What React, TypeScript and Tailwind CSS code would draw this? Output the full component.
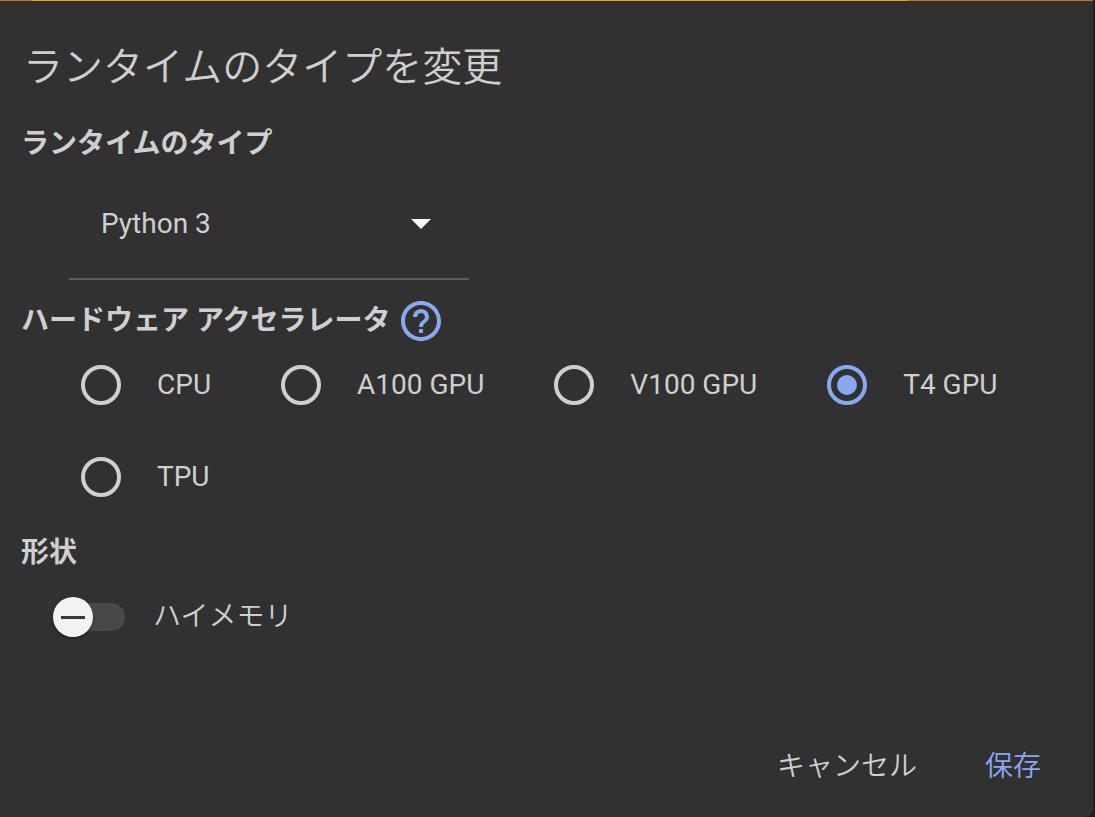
import { useState } from "react";
import { MdArrowDropDown, MdHelpOutline } from "react-icons/md";

const accelerators = ["CPU", "A100 GPU", "V100 GPU", "T4 GPU", "TPU"];

function AcceleratorGroup() {
  const [selected, setSelected] = useState("T4 GPU");
  return (
    <fieldset aria-labelledby="accelerator-heading" className="ml-[60px] flex flex-wrap gap-x-[70px] gap-y-[52px]">
      {accelerators.map((name) => (
        <label key={name} className="flex h-10 items-center gap-9 whitespace-nowrap">
          <input
            type="radio"
            name="accelerator"
            value={name}
            checked={selected === name}
            onChange={() => setSelected(name)}
            className="size-10 shrink-0 appearance-none rounded-full border-4 border-[#cfcfcf] bg-clip-content p-1.5 checked:border-[#89a8f2] checked:bg-[#89a8f2]"
          />
          {name}
        </label>
      ))}
    </fieldset>
  );
}

function HighMemorySwitch() {
  const [on, setOn] = useState(false);
  return (
    <label className="ml-8 flex h-10 w-fit items-center gap-7 font-[350]">
      <span className="relative flex h-10 w-[72px] items-center justify-end">
        <input
          type="checkbox"
          role="switch"
          checked={on}
          onChange={() => setOn(!on)}
          className="peer h-7 w-16 appearance-none rounded-full bg-[#484848]"
        />
        <span className="pointer-events-none absolute top-0 left-0 flex size-10 items-center justify-center rounded-full bg-[#f2f2f2] shadow-sm shadow-black/40 peer-checked:left-8">
          <span className="h-[3px] w-6 bg-[#3a3a3a]" />
        </span>
      </span>
      ハイメモリ
    </label>
  );
}

export default function App() {
  return (
    <div className="min-h-screen bg-[#1f1f1f] pr-0.5 font-['Roboto','Noto_Sans_CJK_JP',sans-serif] text-[28px] leading-10 text-[#cfcfcf]">
      <form
        lang="ja"
        role="dialog"
        aria-labelledby="dialog-title"
        onSubmit={(event) => event.preventDefault()}
        className="flex min-h-screen flex-col rounded-br-lg bg-[#313131]"
      >
        <div className="flex h-px shrink-0">
          <div className="w-8 bg-[#d26b22]" />
          <div className="flex-1 bg-[#eaa12b]" />
          <div className="w-[185px] bg-[#d26b22]" />
        </div>
        <div className="flex flex-1 flex-col px-[21px] pt-[43px] pb-[30px]">
          <h1 id="dialog-title" className="pl-0.5 text-[40px] leading-12 font-[350]">
            ランタイムのタイプを変更
          </h1>
          <label htmlFor="runtime-type" className="mt-8 font-bold">
            ランタイムのタイプ
          </label>
          <div className="mt-3.5 ml-12 grid w-full max-w-[400px] items-center border-b-2 border-[#5c5c5c]">
            <select
              id="runtime-type"
              className="col-start-1 row-start-1 h-[100px] appearance-none bg-transparent px-8 pb-2 leading-10"
            >
              <option>Python 3</option>
            </select>
            <MdArrowDropDown
              aria-hidden="true"
              className="pointer-events-none col-start-1 row-start-1 mr-6 mb-2.5 size-12 justify-self-end text-[#f5f5f5]"
            />
          </div>
          <div className="mt-[17px] flex items-center gap-1.5">
            <h2 id="accelerator-heading" className="font-bold">
              ハードウェア アクセラレータ
            </h2>
            <a href="#help" aria-label="ヘルプ" className="text-[#89a8f2]">
              <MdHelpOutline className="size-12" />
            </a>
          </div>
          <div className="mt-5">
            <AcceleratorGroup />
          </div>
          <h2 className="mt-9 mb-6 font-bold">形状</h2>
          <HighMemorySwitch />
          <div className="mt-auto mr-[31px] flex justify-end gap-[68px]">
            <button type="button" className="font-[350]">
              キャンセル
            </button>
            <button type="submit" className="font-[350] text-[#89a8f2]">
              保存
            </button>
          </div>
        </div>
      </form>
    </div>
  );
}
